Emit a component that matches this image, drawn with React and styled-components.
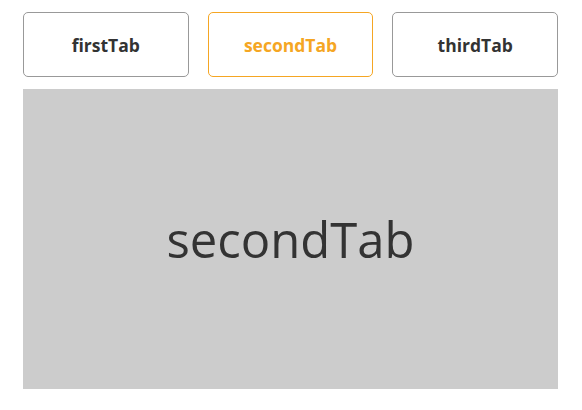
import { useState } from "react";
import styled, { createGlobalStyle } from "styled-components";

const tabs = ["firstTab", "secondTab", "thirdTab"];

export default function App() {
  const [active, setActive] = useState(1);

  return (
    <>
      <GlobalStyle />
      <Wrapper>
        <TabBar>
          {tabs.map((tab, i) => (
            <Tab key={tab} active={i === active} onClick={() => setActive(i)}>
              {tab}
            </Tab>
          ))}
        </TabBar>
        <Panel>{tabs[active]}</Panel>
      </Wrapper>
    </>
  );
}

const GlobalStyle = createGlobalStyle`
  body {
    margin: 0;
    background: #fff;
    font-family: "Open Sans", "Noto Sans", sans-serif;
  }
`;

const Wrapper = styled.div`
  width: 535px;
  margin: 12px 0 0 23px;
`;

const TabBar = styled.div`
  display: grid;
  grid-template-columns: repeat(3, 1fr);
  column-gap: 19px;
  margin-bottom: 12px;
`;

const Tab = styled.button`
  height: 65px;
  padding: 0;
  border: 1px solid ${(props) => (props.active ? "#f5a623" : "#999")};
  border-radius: 5px;
  background: #fff;
  color: ${(props) => (props.active ? "#f5a623" : "#333")};
  font-family: inherit;
  font-size: 17.5px;
  font-weight: 700;
  cursor: pointer;
`;

const Panel = styled.div`
  display: flex;
  align-items: center;
  justify-content: center;
  height: 300px;
  background: #ccc;
  color: #333;
  font-size: 49px;
`;
